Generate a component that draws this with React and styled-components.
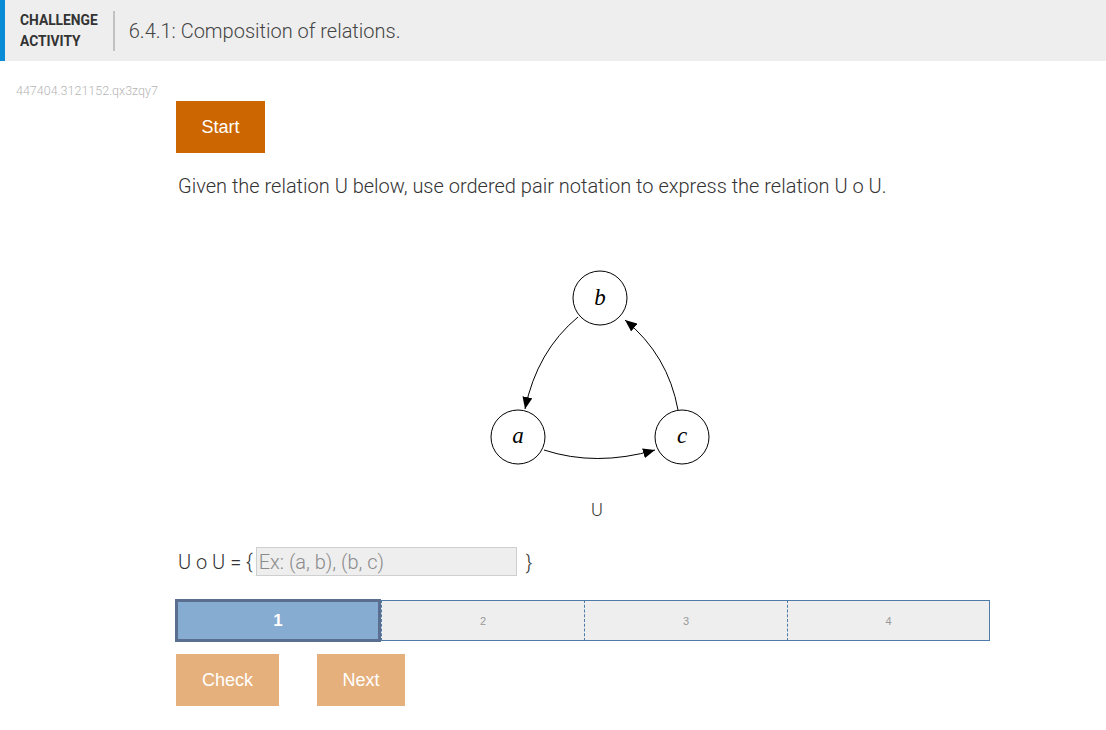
import React from "react";
import styled, { createGlobalStyle } from "styled-components";

const Global = createGlobalStyle`
  html, body {
    margin: 0;
    padding: 0;
    background: #fff;
    font-family: Roboto, "Liberation Sans", sans-serif;
  }
`;

const steps = [1, 2, 3, 4];

const App = () => {
  return (
    <Page>
      <Global />
      <Header>
        <Label>
          CHALLENGE
          <br />
          ACTIVITY
        </Label>
        <Divider />
        <Title>6.4.1: Composition of relations.</Title>
      </Header>
      <ActivityId>447404.3121152.qx3zqy7</ActivityId>
      <Content>
        <StartButton>Start</StartButton>
        <Prompt>
          Given the relation U below, use ordered pair notation to express the
          relation U o U.
        </Prompt>
        <Figure>
          <svg width="260" height="220" viewBox="470 260 260 220">
            <defs>
              <marker
                id="arrow"
                viewBox="0 0 12 10"
                refX="12"
                refY="5"
                markerWidth="12"
                markerHeight="10"
                markerUnits="userSpaceOnUse"
                orient="auto"
              >
                <path d="M0 0 L12 5 L0 10 Z" fill="#000" />
              </marker>
            </defs>
            <g fill="none" stroke="#000" strokeWidth="1">
              <path d="M578 318 Q537 352 525 410" markerEnd="url(#arrow)" />
              <path d="M544 451 Q596 468 655 451" markerEnd="url(#arrow)" />
              <path d="M678 411 Q668 356 625 321" markerEnd="url(#arrow)" />
            </g>
            <g fill="#fff" stroke="#000" strokeWidth="1">
              <circle cx="600" cy="299" r="27" />
              <circle cx="518" cy="438" r="27" />
              <circle cx="682" cy="438" r="27" />
            </g>
            <g
              fontFamily="'Liberation Serif', serif"
              fontStyle="italic"
              fontSize="23"
              textAnchor="middle"
              fill="#000"
            >
              <text x="600" y="306">b</text>
              <text x="518" y="444">a</text>
              <text x="682" y="444">c</text>
            </g>
          </svg>
          <Caption>U</Caption>
        </Figure>
        <AnswerRow>
          <span>U o U = {"{"}</span>
          <AnswerInput placeholder="Ex: (a, b), (b, c)" />
          <span>{"}"}</span>
        </AnswerRow>
        <Progress>
          {steps.map((n) => (
            <Step key={n} $active={n === 1}>
              {n}
            </Step>
          ))}
        </Progress>
        <Actions>
          <ActionButton $w={103}>Check</ActionButton>
          <ActionButton $w={88}>Next</ActionButton>
        </Actions>
      </Content>
    </Page>
  );
};

const Page = styled.div`
  width: 1106px;
  min-height: 730px;
  color: #333;
`;

const Header = styled.div`
  height: 61px;
  background: #eeeeee;
  border-left: 5px solid #0a8bd6;
  display: flex;
  align-items: center;
  padding-left: 15px;
  box-sizing: border-box;
`;

const Label = styled.div`
  font-family: Roboto, "Liberation Sans", sans-serif;
  font-weight: 700;
  font-size: 13.8px;
  line-height: 21px;
  color: #333;
  padding-top: 1px;
`;

const Divider = styled.div`
  width: 2px;
  height: 40px;
  background: #c2c2c2;
  margin: 0 14px 0 15px;
`;

const Title = styled.div`
  font-size: 20px;
  font-weight: 300;
  color: #444;
  padding-top: 1px;
`;

const ActivityId = styled.div`
  font-size: 12.5px;
  color: #b5b5b5;
  padding: 23px 0 0 16px;
  line-height: 14px;
  font-weight: 300;
`;

const Content = styled.div`
  padding-left: 176px;
  display: flex;
  flex-direction: column;
  align-items: flex-start;
`;

const StartButton = styled.button`
  margin-top: 3px;
  width: 89px;
  height: 52px;
  border: 0;
  background: #cc6600;
  color: #fff;
  font-family: "Liberation Sans", Arial, sans-serif;
  font-size: 18px;
  padding: 0;
`;

const Prompt = styled.p`
  margin: 21px 0 0 2px;
  font-size: 20px;
  font-weight: 300;
  line-height: 24px;
  color: #333;
`;

const Figure = styled.div`
  margin: 61px 0 0 294px;
  display: flex;
  flex-direction: column;
  align-items: flex-start;

  svg {
    display: block;
  }
`;

const Caption = styled.div`
  margin: 21px 0 0 121px;
  font-size: 18px;
  font-weight: 300;
  color: #333;
  line-height: 20px;
`;

const AnswerRow = styled.div`
  margin: 27px 0 0 2px;
  display: flex;
  align-items: center;
  gap: 3px;
  font-size: 20px;
  font-weight: 300;
  color: #333;

  span:last-child {
    margin-left: 6px;
  }
`;

const AnswerInput = styled.input`
  width: 261px;
  height: 29px;
  box-sizing: border-box;
  border: 1px solid #cfcfcf;
  background: #eeeeee;
  font-family: Roboto, "Liberation Sans", sans-serif;
  font-size: 20px;
  font-weight: 300;
  padding: 0 2px;
  outline: none;

  &::placeholder {
    color: #8a8a8a;
  }
`;

const Progress = styled.div`
  margin-top: 23px;
  margin-left: -1px;
  width: 815px;
  height: 43px;
  display: grid;
  grid-template-columns: 206px 1fr 1fr 1fr;
  align-items: center;
`;

const Step = styled.div`
  box-sizing: border-box;
  display: flex;
  align-items: center;
  justify-content: center;
  height: ${(p) => (p.$active ? "43px" : "41px")};
  background: ${(p) => (p.$active ? "#87acd1" : "#eeeeee")};
  border: ${(p) => (p.$active ? "3px solid #5a6f90" : "0")};
  border-top: ${(p) => (p.$active ? "3px solid #5a6f90" : "1px solid #4f7ba8")};
  border-bottom: ${(p) =>
    p.$active ? "3px solid #5a6f90" : "1px solid #4f7ba8"};
  color: ${(p) => (p.$active ? "#fff" : "#999")};
  font-size: ${(p) => (p.$active ? "17px" : "11px")};
  font-weight: ${(p) => (p.$active ? 700 : 400)};
  font-family: "Liberation Sans", Arial, sans-serif;

  & + & {
    border-left: ${(p) => (p.$active ? "3px solid #5a6f90" : "1px dashed #4f7ba8")};
  }

  &:last-child {
    border-right: 1px solid #4f7ba8;
  }
`;

const Actions = styled.div`
  margin-top: 12px;
  display: flex;
  gap: 38px;
`;

const ActionButton = styled.button`
  width: ${(p) => p.$w}px;
  height: 52px;
  border: 0;
  padding: 0;
  background: #e6b07c;
  color: #fff;
  font-family: "Liberation Sans", Arial, sans-serif;
  font-size: 18px;
`;

export default App;
